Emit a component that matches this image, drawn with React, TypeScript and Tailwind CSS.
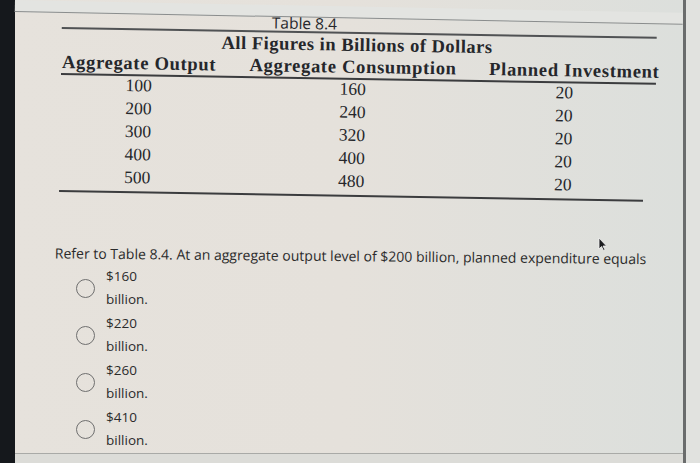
const serif = { fontFamily: '"Liberation Serif", "DejaVu Serif", serif' }
const sans = { fontFamily: '"Open Sans", "Noto Sans", sans-serif' }

const rows = [
  { output: 100, consumption: 160, investment: 20 },
  { output: 200, consumption: 240, investment: 20 },
  { output: 300, consumption: 320, investment: 20 },
  { output: 400, consumption: 400, investment: 20 },
  { output: 500, consumption: 480, investment: 20 },
]

const options = ['$160', '$220', '$260', '$410']

function Option({ amount }: { amount: string }) {
  return (
    <div className="flex h-[47px] items-center">
      <div className="ml-[61px] h-[19px] w-[19px] rounded-full border-[1.5px] border-[#6f6f6f]" />
      <div className="ml-[11px] flex flex-col text-[13.5px] leading-[23px] text-[#2b2b2b]">
        <span>{amount}</span>
        <span>billion.</span>
      </div>
    </div>
  )
}

export default function App() {
  return (
    <div className="relative flex h-[463px] w-[700px] overflow-hidden bg-[#e2e3e0]">
      <div className="w-[15px] shrink-0 bg-[#15181c]" />

      <div className="flex min-w-0 flex-1 flex-col bg-gradient-to-r from-[#e6e2dc] via-[#e5e1db] to-[#dcdfdc]">
        {/* top strip of the browser chrome */}
        <div className="h-[12px] shrink-0 origin-top-left rotate-[1.1deg] border-b border-[#8a8d8d] bg-[#e3e4e1]" />

        {/* table */}
        <div className="ml-[47px] mt-[2px] w-[595px] origin-top-left rotate-[0.95deg] text-[#25272b]">
          <div className="flex h-[13px] items-end pl-[210px]" style={sans}>
            <span className="text-[15.5px] leading-none">Table 8.4</span>
          </div>
          <div className="h-[1.5px] bg-[#505254]" />

          <div className="pl-[160px] text-[18.5px] font-bold leading-[22px] tracking-[0.5px]" style={serif}>
            All Figures in Billions of Dollars
          </div>

          <div className="grid grid-cols-[156px_272px_167px] text-[18.5px] font-bold leading-[22px] tracking-[0.7px]" style={serif}>
            <div className="whitespace-nowrap text-center">Aggregate Output</div>
            <div className="whitespace-nowrap text-center">Aggregate Consumption</div>
            <div className="whitespace-nowrap text-center">Planned Investment</div>
          </div>
          <div className="h-[2px] bg-[#3b3c3e]" />

          <div className="-mt-[2px] text-[17.5px] leading-[23px]" style={serif}>
            {rows.map((r) => (
              <div key={r.output} className="grid grid-cols-[156px_272px_167px]">
                <div className="text-center">{r.output}</div>
                <div className="text-center">{r.consumption}</div>
                <div className="pr-[16px] text-center">{r.investment}</div>
              </div>
            ))}
          </div>
          <div className="mt-[2px] h-[2px] w-[584px] bg-[#3b3c3e]" />
        </div>

        {/* question */}
        <div className="mt-[52px] origin-top-left rotate-[0.55deg] whitespace-nowrap pl-[40px] text-[14px] leading-[18px] text-[#2b2b2b]" style={sans}>
          Refer to Table 8.4. At an aggregate output level of $200 billion, planned expenditure equals
        </div>

        <div className="mt-[3px] flex flex-col" style={sans}>
          {options.map((o) => (
            <Option key={o} amount={o} />
          ))}
        </div>

        <div className="mt-auto h-[13px] border-t border-[#a9aaa7] bg-[#dcdcd8]" />
      </div>

      <div className="w-[3px] shrink-0 bg-[#6a6c6c]" />
      <div className="w-[14px] shrink-0 bg-[#e1e2df]" />

      {/* mouse pointer */}
      <svg className="absolute left-[598px] top-[237px]" width="10" height="14" viewBox="0 0 10 14">
        <path d="M1 1 L1 12 L3.5 9.5 L5.5 13.5 L7 12.8 L5 9 L8.5 9 Z" fill="#1b1c1e" stroke="#f2f2f2" strokeWidth="0.8" />
      </svg>
    </div>
  )
}
